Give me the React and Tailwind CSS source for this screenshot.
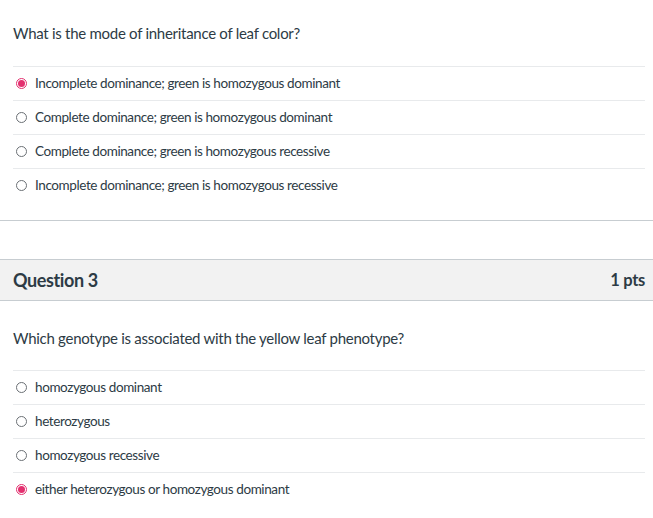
import React from 'react'

const q2Answers = [
  { text: 'Incomplete dominance; green is homozygous dominant', picked: true },
  { text: 'Complete dominance; green is homozygous dominant' },
  { text: 'Complete dominance; green is homozygous recessive' },
  { text: 'Incomplete dominance; green is homozygous recessive' },
]

const q3Answers = [
  { text: 'homozygous dominant' },
  { text: 'heterozygous' },
  { text: 'homozygous recessive' },
  { text: 'either heterozygous or homozygous dominant', picked: true },
]

function Radio({ picked }) {
  if (picked) {
    return (
      <span className="flex h-[11px] w-[11px] items-center justify-center rounded-full border border-[#e3306f] bg-white">
        <span className="h-[7px] w-[7px] rounded-full bg-[#e3306f]" />
      </span>
    )
  }
  return <span className="h-[11px] w-[11px] rounded-full border border-[#6b7075] bg-white" />
}

function AnswerList({ answers }) {
  return (
    <div className="pl-[13px] pr-[8px]">
      {answers.map((a) => (
        <div key={a.text} className="flex h-[34px] items-center gap-[8px] border-t border-[#e8eaec] pl-[3px]">
          <Radio picked={a.picked} />
          <span className="text-[13.5px] tracking-[-0.4px]">{a.text}</span>
        </div>
      ))}
    </div>
  )
}

export default function App() {
  return (
    <div className="min-h-screen bg-white text-[#2d3b45]" style={{ fontFamily: 'Lato, "Open Sans", sans-serif' }}>
      {/* previous question, cut off at the top */}
      <div className="flex h-[66px] items-center px-[13px] text-[15px] tracking-[-0.28px]">
        What is the mode of inheritance of leaf color?
      </div>
      <AnswerList answers={q2Answers} />
      <div className="h-[19px] border-b border-[#c7cdd1]" />
      <div className="h-[38px]" />

      {/* Question 3 */}
      <div className="flex h-[42px] items-center justify-between border-y border-[#c7cdd1] bg-[#f2f2f2] pl-[13px] pr-[8px]">
        <h2 className="text-[18px] font-bold tracking-[-0.4px]">Question 3</h2>
        <span className="text-[16.5px] font-bold tracking-[-0.3px]">1 pts</span>
      </div>
      <div className="flex h-[69px] items-center px-[13px] pt-[5px] text-[15px] tracking-[-0.28px]">
        Which genotype is associated with the yellow leaf phenotype?
      </div>
      <AnswerList answers={q3Answers} />
    </div>
  )
}
